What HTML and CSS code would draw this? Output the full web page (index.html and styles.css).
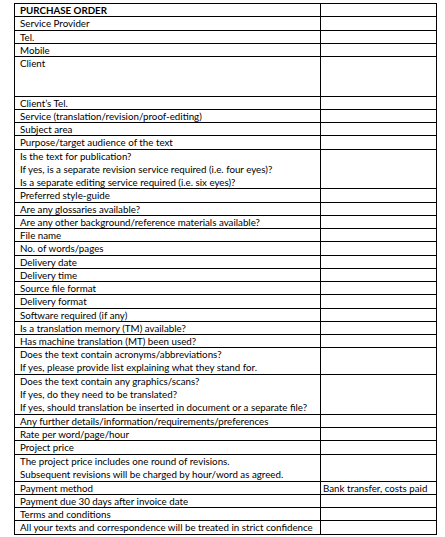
FILE: index.html
```html
<!DOCTYPE html>
<html>
<head>
<meta charset="utf-8">
<link rel="stylesheet" href="styles.css">
</head>
<body>
<table class="po">
<tr><td class="q head">PURCHASE ORDER</td><td class="a"></td></tr>
<tr><td class="q">Service Provider</td><td class="a"></td></tr>
<tr><td class="q">Tel.</td><td class="a"></td></tr>
<tr><td class="q">Mobile</td><td class="a"></td></tr>
<tr class="l3"><td class="q">Client<br>&nbsp;<br>&nbsp;</td><td class="a"></td></tr>
<tr><td class="q">Client’s Tel.</td><td class="a"></td></tr>
<tr><td class="q">Service (translation/revision/proof-editing)</td><td class="a"></td></tr>
<tr><td class="q">Subject area</td><td class="a"></td></tr>
<tr><td class="q">Purpose/target audience of the text</td><td class="a"></td></tr>
<tr class="l3"><td class="q">Is the text for publication?<br>If yes, is a separate revision service required (i.e. four eyes)?<br>Is a separate editing service required (i.e. six eyes)?</td><td class="a"></td></tr>
<tr><td class="q">Preferred style-guide</td><td class="a"></td></tr>
<tr><td class="q">Are any glossaries available?</td><td class="a"></td></tr>
<tr><td class="q">Are any other background/reference materials available?</td><td class="a"></td></tr>
<tr><td class="q">File name</td><td class="a"></td></tr>
<tr><td class="q">No. of words/pages</td><td class="a"></td></tr>
<tr><td class="q">Delivery date</td><td class="a"></td></tr>
<tr><td class="q">Delivery time</td><td class="a"></td></tr>
<tr><td class="q">Source file format</td><td class="a"></td></tr>
<tr><td class="q">Delivery format</td><td class="a"></td></tr>
<tr><td class="q">Software required (if any)</td><td class="a"></td></tr>
<tr><td class="q">Is a translation memory (TM) available?</td><td class="a"></td></tr>
<tr><td class="q">Has machine translation (MT) been used?</td><td class="a"></td></tr>
<tr class="l2"><td class="q">Does the text contain acronyms/abbreviations?<br>If yes, please provide list explaining what they stand for.</td><td class="a"></td></tr>
<tr class="l3"><td class="q">Does the text contain any graphics/scans?<br>If yes, do they need to be translated?<br>If yes, should translation be inserted in document or a separate file?</td><td class="a"></td></tr>
<tr><td class="q">Any further details/information/requirements/preferences</td><td class="a"></td></tr>
<tr><td class="q">Rate per word/page/hour</td><td class="a"></td></tr>
<tr><td class="q">Project price</td><td class="a"></td></tr>
<tr class="l2"><td class="q">The project price includes one round of revisions.<br>Subsequent revisions will be charged by hour/word as agreed.</td><td class="a"></td></tr>
<tr><td class="q">Payment method</td><td class="a">Bank transfer, costs paid</td></tr>
<tr><td class="q">Payment due 30 days after invoice date</td><td class="a"></td></tr>
<tr><td class="q">Terms and conditions</td><td class="a"></td></tr>
<tr><td class="q">All your texts and correspondence will be treated in strict confidence</td><td class="a"></td></tr>
</table>
</body>
</html>
```

FILE: styles.css
```css
html, body {
  margin: 0;
  padding: 0;
  background: #fff;
}
body {
  padding: 3px 0 0 14px;
  font-family: Lato, "Open Sans", sans-serif;
  font-size: 9.75px;
  color: #000;
}
.po {
  border-collapse: collapse;
  width: 421px;
  table-layout: fixed;
}
.po td {
  border: 1px solid #000;
  padding: 0;
  line-height: 12.25px;
  vertical-align: top;
  white-space: nowrap;
  overflow: hidden;
}
.po .q {
  width: 300px;
  padding-left: 5px;
}
.po .a {
  width: 113px;
  padding-left: 2px;
}
.po .head {
  font-weight: bold;
}
.po .l3 td,
.po .l2 td {
  line-height: 12.9px;
}
```
